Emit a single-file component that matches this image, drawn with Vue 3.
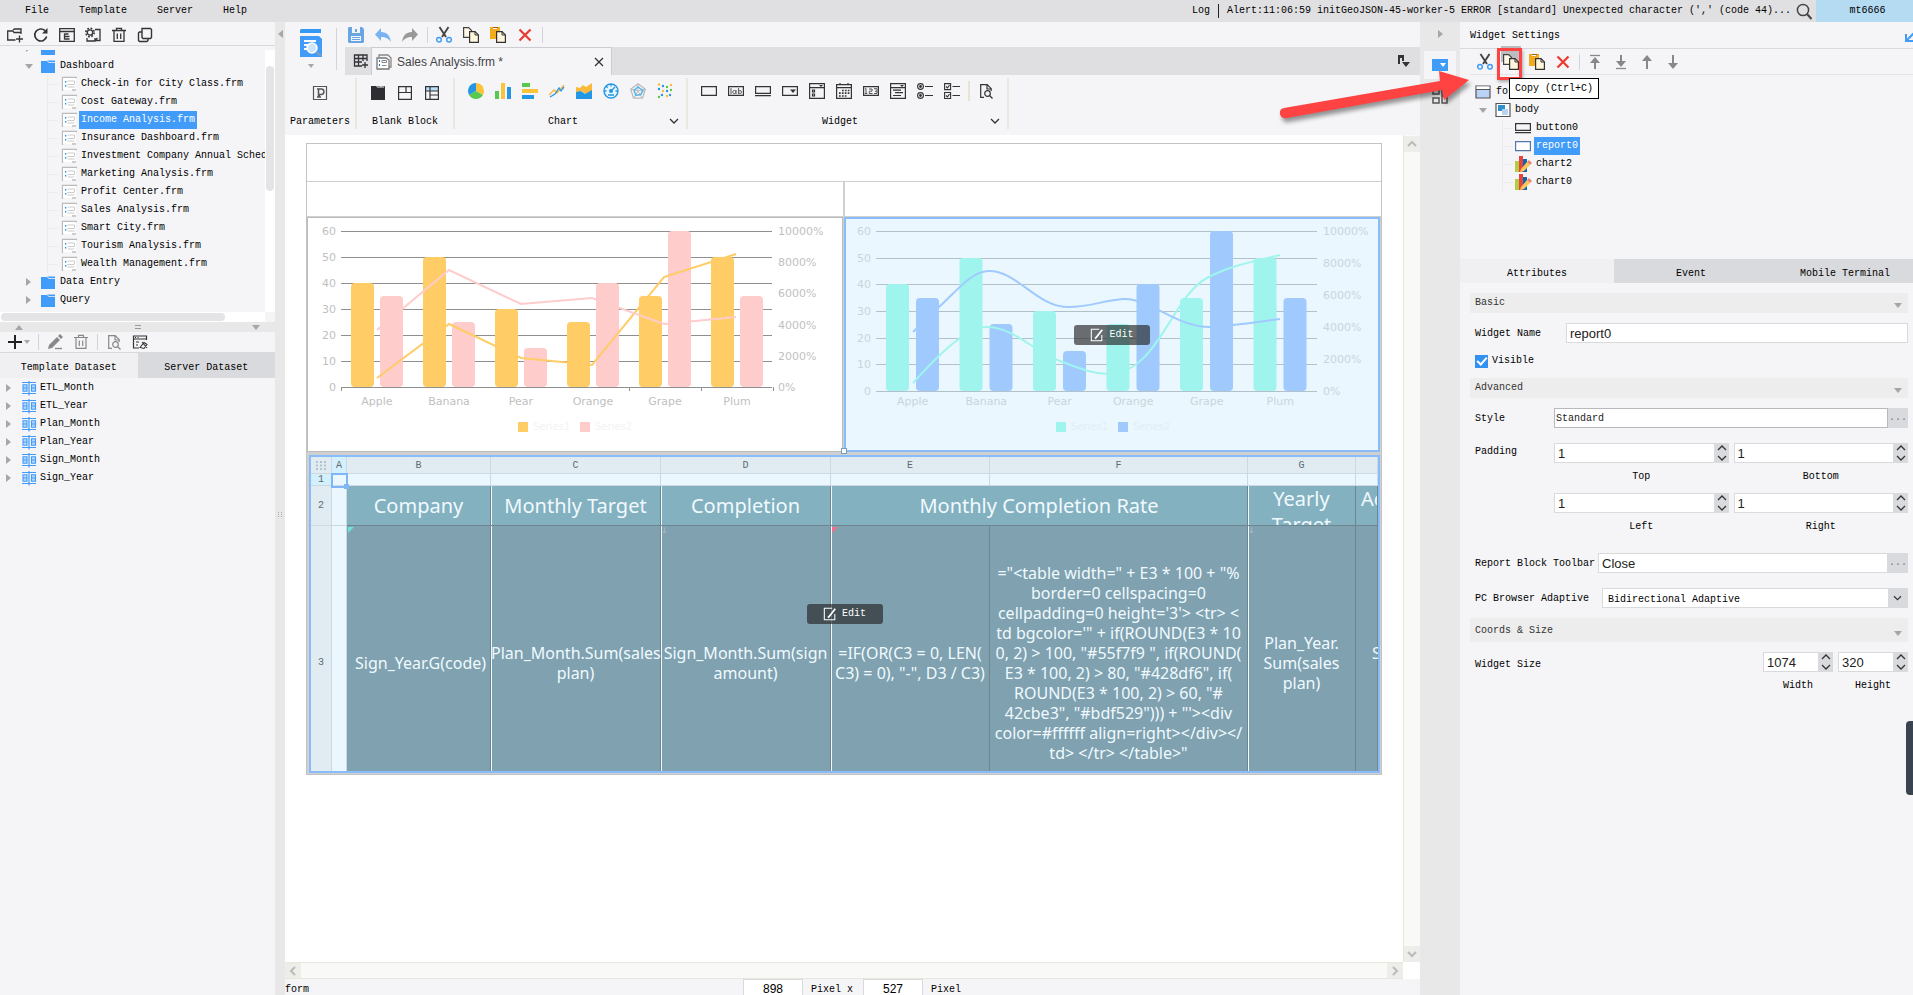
<script setup>
import { ref } from 'vue'

const D = '#333338'
const icons = {
  folderPlus: `<g fill="none" stroke="${D}" stroke-width="1.3"><path d="M8.500 13H.7V4h5.500M6 3l1.500-1H14v5M6 4l1 1.500h7M12.500 8.500v7M9 12h7"/></g>`,
  refresh: `<path d="M13.6 9.5A6 6 0 1 1 12 3.7" fill="none" stroke="${D}" stroke-width="1.7"/><path d="M14.5 1v5.500h-5.500z" fill="${D}"/>`,
  listBox: `<g fill="none" stroke="${D}" stroke-width="1.3"><path d="M.7 1.700h14.600v12.600H.7zM.7 4.500h14.600M5.500 6.500v6M5.500 7h4M5.500 9.500h5M5.500 12h5"/></g>`,
  gearDoc: `<g fill="none" stroke="${D}" stroke-width="1.3"><circle cx="5" cy="5.500" r="2.700"/><path d="M10 2.500h5v11H10M2 11v3h8v-3M12.500 11l-2 2"/></g><circle cx="5" cy="5.500" r="4.200" fill="none" stroke="${D}" stroke-width="1.600" stroke-dasharray="1.800 1.500"/>`,
  trash: `<path d="M1 3.500h14M5.500 3V1.300h5V3M3 4v10.300h10V4M6.300 6.500v5.500M9.700 6.500v5.500" fill="none" stroke="${D}" stroke-width="1.300"/>`,
  squares: `<path d="M5 1.500h8.500l1 1v8l-1 1H6l-1-1zM4.500 5H2.500l-1 1v7.500l1 1H10l1-1V12" fill="none" stroke="${D}" stroke-width="1.400"/>`,
  plus: `<path d="M8 1v14M1 8h14" stroke="#222" stroke-width="2"/>`,
  pencil: `<path d="M2 11l8-8 3 3-8 8-4 1zM11 2l2-2 3 3-2 2z" fill="#888"/><path d="M8 14.500h7" stroke="#888" stroke-width="1.300"/>`,
  trashG: `<path d="M1 3.500h14M5.500 3V1.300h5V3M3 4v10.300h10V4M6.300 6.500v5.500M9.700 6.500v5.500" fill="none" stroke="#888" stroke-width="1.200"/>`,
  docFindG: `<path d="M6 14.300H2.700V1.700h6.500l4 4V8M9 2v4h4" fill="none" stroke="#888" stroke-width="1.200"/><circle cx="9.500" cy="10.500" r="2.800" fill="none" stroke="#888" stroke-width="1.200"/><path d="M11.500 12.500l3 3" stroke="#888" stroke-width="1.300"/>`,
  docFind: `<path d="M6 14.300H2.700V1.700h6.500l4 4V8M9 2v4h4" fill="none" stroke="${D}" stroke-width="1.200"/><circle cx="9.500" cy="10.500" r="2.800" fill="none" stroke="${D}" stroke-width="1.200"/><path d="M11.500 12.500l3 3" stroke="${D}" stroke-width="1.300"/>`,
  formEdit: `<path d="M7 14H1.500V2h13v4M1.500 5h13M4 8h3M4 11h2M3 3.500h1M5.500 3.500h1" fill="none" stroke="${D}" stroke-width="1.200"/><path d="M8 13.500l4-5 3 2-3 4zM10 8l5 6" fill="none" stroke="${D}" stroke-width="1.100"/>`,
  save: `<path d="M0 1l1-1h13l2 2v13l-1 1H1l-1-1z" fill="#69a5e2"/><path d="M4 0h8v6H4z" fill="#f5f5f7"/><path d="M7 2h2v3H7z" fill="#69a5e2"/><path d="M3 9h10v5H3z" fill="#f5f5f7"/><path d="M4 10.500h8M4 12.500h8" stroke="#69a5e2"/>`,
  undo: `<path d="M6 1v4c6 0 9 3.500 10 10-2.500-3.500-5-5-10-5v4L0 7.500z" fill="#7ab3f0"/>`,
  redo: `<path d="M10 1v4C4 5 1 8.500 0 15c2.500-3.500 5-5 10-5v4l6-6.500z" fill="#999"/>`,
  cut: `<path d="M3.500 0l6.500 10M12.500 0L6 10" stroke="#444" stroke-width="1.900"/><circle cx="3" cy="12.700" r="2.300" fill="none" stroke="#419bf9" stroke-width="1.500"/><circle cx="13" cy="12.700" r="2.300" fill="none" stroke="#419bf9" stroke-width="1.500"/>`,
  copy: `<path d="M.6.600h5l3 3v6.800h-8z" fill="#fffbe8" stroke="#444" stroke-width="1.200"/><path d="M6.600 4.600h5.500l3.300 3.300v7.500H6.600z" fill="#fff6dc" stroke="#333" stroke-width="1.200"/><path d="M12 4.600V8h3.400" fill="none" stroke="#333"/>`,
  paste: `<path d="M0 0h10v12H0z" fill="#f2ab1c"/><path d="M3 0h4v2H3z" fill="#fff"/><path d="M3 0h5v1H3z" fill="#a55b16"/><path d="M6.600 4.600h5.500l3.300 3.300v7.500H6.600z" fill="#fff6dc" stroke="#333" stroke-width="1.200"/><path d="M12 4.600V8h3.400" fill="none" stroke="#333"/>`,
  del: `<path d="M2.500 2.500l11 11M13.500 2.500l-11 11" stroke="#ea3c33" stroke-width="2.300"/>`,
  toTop: `<path d="M3 1.500h10" stroke="#888" stroke-width="1.300"/><path d="M8 3l5 6H3z" fill="#888"/><path d="M7 8h2v7H7z" fill="#888"/>`,
  toBottom: `<path d="M3 14.500h10" stroke="#888" stroke-width="1.300"/><path d="M8 13L3 7h10z" fill="#888"/><path d="M7 1h2v7H7z" fill="#888"/>`,
  up: `<path d="M8 1l5 6H3z" fill="#888"/><path d="M7 6h2v9H7z" fill="#888"/>`,
  down: `<path d="M8 15L3 9h10z" fill="#888"/><path d="M7 1h2v9H7z" fill="#888"/>`,
  gridPlus: `<path d="M9 13H1.500V2H14v6M1.500 5.500H14M1.500 9H9M5.500 2v11M10 2v6M12 9v6M9 12h6" fill="none" stroke="${D}" stroke-width="1.300"/>`,
  frmTab: `<path d="M3 3V1h9l3 3v9h-2" fill="none" stroke="#888" stroke-width="1.300"/><path d="M1 4h9l3 2v9H1z" fill="#fff" stroke="#777" stroke-width="1.300"/><path d="M3 6h1v2H3zM3 10h1v2H3z" fill="#1c6fd1"/><path d="M6 6.500h4.500v2H6zM6 11.500h4.500" fill="none" stroke="#888"/>`,
  param: `<path d="M1.500 1.500h13v13h-13z" fill="none" stroke="#555" stroke-width="1.200"/><path d="M5 4h4.200a2.600 2.600 0 0 1 0 5.400H7.300V12H5M6.500 4v8M5 12h4" fill="none" stroke="#555" stroke-width="1.500"/>`,
  block1: `<path d="M1 1h5v2h9v12H1z" fill="#2e2e32"/><path d="M7 2h3M12 2h3" stroke="#2e2e32" stroke-width="1"/><path d="M6.500 1.500v3M11 1.500v3M14.500 1.500v3" stroke="#2e2e32"/>`,
  block2: `<path d="M1.600 1.600h12.800v12.800H1.600zM1.600 7.500h12.800M9 1.600v6" fill="none" stroke="${D}" stroke-width="1.200"/>`,
  block3: `<path d="M1.600 1.600h12.800V6H1.600z" fill="#b9def5"/><path d="M1.600 1.600h12.800v12.800H1.600zM1.600 6h12.800M6 1.600v12.800M6 10h8" fill="none" stroke="${D}" stroke-width="1.200"/>`,
  pie: `<path d="M8 8V0a8 8 0 0 0-6.900 12z" fill="#2496e6"/><path d="M8 8V0a8 8 0 0 1 6.900 12z" fill="#fbc33b"/><path d="M8 8l6.900 4A8 8 0 0 1 1.100 12z" fill="#57c94f"/>`,
  column: `<path d="M0 8h4v8H0z" fill="#57c94f"/><path d="M6 0h4v16H6z" fill="#fbc33b"/><path d="M12 4h4v12h-4z" fill="#2496e6"/>`,
  bar: `<path d="M0 0h8v4H0z" fill="#57c94f"/><path d="M0 6h16v4H0z" fill="#fbc33b"/><path d="M0 12h12v4H0z" fill="#2496e6"/>`,
  line: `<path d="M0 12l5-5 3 3 7-8" fill="none" stroke="#fbb93b" stroke-width="1.400"/><path d="M1 14l5-3 4-6 2 3 3-4" fill="none" stroke="#2496e6" stroke-width="1.300"/>`,
  area: `<path d="M0 4l4 1 3-3 3 2 6-4v8L9 11 6 8l-6 2z" fill="#fbb93b"/><path d="M0 9l5-1 4 3 7-4v9H0z" fill="#2496e6"/>`,
  gauge: `<circle cx="8" cy="8" r="7" fill="#e9f5fd" stroke="#2496e6" stroke-width="1.400"/><path d="M8 8l4-4M8 1v2.500M1 8h2.500M12.500 8H15M3 3l1.700 1.700M5 12h6" stroke="#2496e6" stroke-width="1.300"/><circle cx="8" cy="8" r="2" fill="#2496e6"/>`,
  radar: `<path d="M8 .7l7.300 5.500-2.800 9h-9L.7 6.200z" fill="none" stroke="#bbb" stroke-width="1.300"/><path d="M8 4l4 3-1.500 5h-5L4 7zM8 1v7M1 6l7 2M15 6L8 8M4 15l4-7M12 15L8 8" fill="none" stroke="#bbb"/><path d="M8 4l5 3.500-2 4-5 1-2-5z" fill="none" stroke="#54b6f2" stroke-width="1.400"/>`,
  scatter: `<g fill="#2496e6"><circle cx="6" cy="3" r="1.200"/><circle cx="2" cy="6" r="1.200"/><circle cx="10" cy="8" r="1.200"/><circle cx="13" cy="12" r="1.200"/><circle cx="5" cy="12" r="1.200"/></g><g fill="#fbb93b"><circle cx="2" cy="1.500" r="1.200"/><circle cx="14" cy="2" r="1.200"/><circle cx="6" cy="8" r="1.200"/><circle cx="10" cy="13" r="1.200"/></g><g fill="#57c94f"><circle cx="10" cy="4" r="1.200"/><circle cx="14" cy="7" r="1.200"/><circle cx="2" cy="14" r="1.200"/></g>`,
  wRect: `<path d="M.6 3.600h14.800v8.800H.6z" fill="none" stroke="${D}" stroke-width="1.200"/>`,
  wLab: `<path d="M.6 3.600h14.800v8.800H.6z" fill="none" stroke="${D}" stroke-width="1.200"/><path d="M3 5v6M8 7v4M10.500 5v6" stroke="#666" stroke-width="1.100"/><circle cx="6.300" cy="9" r="1.600" fill="none" stroke="#666"/><circle cx="12" cy="9" r="1.500" fill="none" stroke="#666"/>`,
  wButton: `<path d="M.6 3.600h14.800v6.800H.6zM0 12.600h16" fill="none" stroke="${D}" stroke-width="1.200"/>`,
  wCombo: `<path d="M.6 3.600h14.800v8.800H.6z" fill="none" stroke="${D}" stroke-width="1.200"/><path d="M8 6.500h6L11 10z" fill="${D}"/>`,
  wTreeCombo: `<path d="M.6.600h14.800v14.800H.6zM.6 4.600h14.800M3.500 7h2v2h-2zM3.500 11h2v2h-2z" fill="none" stroke="${D}" stroke-width="1.200"/><path d="M10 2h4l-2 2z" fill="${D}"/>`,
  wCalendar: `<path d="M.6 1.600h14.800v13.800H.6zM.6 4.600h14.800M4 0v2M12 0v2" fill="none" stroke="${D}" stroke-width="1.200"/><path d="M6 7.500h8M3 10.200h11M3 13h8" stroke="${D}" stroke-width="1.700" stroke-dasharray="1.700 1.200"/>`,
  wNumber: `<path d="M.6 3.600h14.800v8.800H.6z" fill="none" stroke="${D}" stroke-width="1.200"/><path d="M2 6l1-.500v5M1.800 10.500h2.500M6 6h3v2.200H6.300v2.300H9.500M11 5.700h3v2.500h-2M14 8v2.500h-3" fill="none" stroke="#555"/>`,
  wText: `<path d="M.6.600h14.800v14.800H.6zM.6 4.600h14.800M3 7.200h8M5 9.700h8M3 12.500h8" fill="none" stroke="${D}" stroke-width="1.200"/><path d="M10 2h4l-2 2z" fill="${D}"/>`,
  wRadio: `<g fill="none" stroke="${D}" stroke-width="1.100"><circle cx="3.500" cy="3.500" r="2.900"/><circle cx="3.500" cy="12.500" r="2.900"/><path d="M8 3.500h8M8 12.500h8"/></g><circle cx="3.500" cy="3.500" r="1.400" fill="${D}"/><circle cx="3.500" cy="12.500" r="1.400" fill="${D}"/>`,
  wCheck: `<path d="M.6.600h6v6h-6zM.6 9.500h6v6h-6zM8.500 3.500H16M8.500 12.500H16M2 3.500l1.500 1.500 2-3M2 12.500L3.500 14l2-3" fill="none" stroke="${D}" stroke-width="1.100"/>`,
  chevron: `<path d="M4 6l4 4 4-4" fill="none" stroke="#333" stroke-width="1.300"/>`,
  close: `<path d="M4 4l8 8M12 4l-8 8" stroke="#333" stroke-width="1.300"/>`,
  corner: `<path d="M3 2h6v6H7V5H5v6H3z" fill="#333"/><path d="M7 9h8l-4 5z" fill="#333"/>`,
  search: `<circle cx="7" cy="7" r="5.600" fill="none" stroke="#444" stroke-width="1.500"/><path d="M11 11l4.500 5" stroke="#444" stroke-width="2"/>`,
  folder: `<path d="M1 3h6l2 2h6v10H1z" fill="#419bf9"/><path d="M7 2.500h8v1.700H9.500z" fill="#419bf9"/>`,
  frm: `<path d="M1.500 15V1.500H16" fill="none" stroke="#bbb" stroke-width="1.300"/><path d="M2 2h13v12H2z" fill="#fff"/><path d="M4 5h1.300v1.500H4zM4 9h1.300v1.500H4z" fill="#1c8fe0"/><path d="M6.500 5h7v3M6.500 8.500h7M6.500 11h7" fill="none" stroke="#ccc"/><path d="M11 13h4v2h-4z" fill="#ccc"/>`,
  dataset: `<path d="M1 2.500h14M1 13.500h14M8 1v14.500" stroke="#419bf9" stroke-width="1.200"/><g fill="#b5d7fb" stroke="#419bf9" stroke-width="1.100"><path d="M2 4.800h4v6.400H2zM2 8h4M10.500 4.800h4v6.400h-4zM10.500 8h4"/></g>`,
  wForm: `<path d="M1 2h14v12H1z" fill="#b9d2f5" stroke="#555" stroke-width="1.200"/><path d="M1.500 2.500h13V5h-13z" fill="#fff"/><path d="M1 5.500h14" stroke="#555"/>`,
  wBody: `<path d="M1 1.500h14v13H1z" fill="#fff" stroke="#555" stroke-width="1.200"/><path d="M3 3h7v6H3z" fill="#2f8fc9"/><path d="M7 7h6v6H7z" fill="#b9d2f5"/>`,
  wReport: `<path d="M.6 3.600h14.800v9H.6z" fill="#fff" stroke="#5377a8" stroke-width="1.200"/>`,
  wChart: `<path d="M0 5h4v11H0z" fill="#b4cb46"/><path d="M4 0h4v16H4z" fill="#e8443c"/><path d="M8 3h4v13H8z" fill="#0d68b1"/><path d="M6 13l6-7 3 3-6 6-4 1z" fill="#fbc55a"/><path d="M12 6l2-2 3 3-2 2z" fill="#f0836a"/>`,
  edit: `<path d="M10.500 1.500h-9v13h12V8" fill="none" stroke="#fff" stroke-width="1.200"/><path d="M14 2l-7 9-1.500 1" fill="none" stroke="#fff" stroke-width="2"/>`,
  sideBlue: `<path d="M0 2h16v12H0z" fill="#419bf9"/><path d="M8 6h6l-3 4z" fill="#fff"/>`,
  sideGrid: `<path d="M1 1h6v5H1zM1 10h6v5H1zM10 1h5v14h-5zM10 8h5" fill="none" stroke="#555" stroke-width="1.500"/>`,
  pin: `<path d="M16 1L4 13M3 7v7h7" fill="none" stroke="#419bf9" stroke-width="2"/>`
}

const menus = ['File', 'Template', 'Server', 'Help']
const leftTools = ['folderPlus', 'refresh', 'listBox', 'gearDoc', 'trash', 'squares']
const files = [
  'Check-in for City Class.frm', 'Cost Gateway.frm', 'Income Analysis.frm', 'Insurance Dashboard.frm',
  'Investment Company Annual Schedule.frm', 'Marketing Analysis.frm', 'Profit Center.frm',
  'Sales Analysis.frm', 'Smart City.frm', 'Tourism Analysis.frm', 'Wealth Management.frm'
]
const selectedFile = ref('Income Analysis.frm')
const datasets = ['ETL_Month', 'ETL_Year', 'Plan_Month', 'Plan_Year', 'Sign_Month', 'Sign_Year']
const chartTools = ['pie', 'column', 'bar', 'line', 'area', 'gauge', 'radar', 'scatter']
const widgetTools = ['wRect', 'wLab', 'wButton', 'wCombo', 'wTreeCombo', 'wCalendar', 'wNumber', 'wText', 'wRadio', 'wCheck']
const widgets = [
  { name: 'button0', icon: 'wButton' },
  { name: 'report0', icon: 'wReport' },
  { name: 'chart2', icon: 'wChart' },
  { name: 'chart0', icon: 'wChart' }
]
const selectedWidget = ref('report0')

const fruits = ['Apple', 'Banana', 'Pear', 'Orange', 'Grape', 'Plum']
const first = [40, 50, 30, 25, 35, 50]
const second = [35, 25, 15, 40, 60, 35]
const charts = [
  {
    name: 'chart0', box: '0 0 534 233', left: 33, right: 464, top: 13, bottom: 169, pitch: 72, a: 10, b: 39, w: 23,
    colors: ['#ffcc66', '#ffcccc'], grid: '#8f8f8f', text: '#bfbfbf', faint: '#f3f3f3', ticks: [0, 4, 5, 6],
    lines: ['M69 160L141 106L213 140L284 147L356 59L428 36', 'M69 112L141 52L213 86L284 80L356 106L428 99'], legendY: 204, labelY: 187
  },
  {
    name: 'chart2', box: '0 0 532 231', left: 30, right: 471, top: 12, bottom: 172, pitch: 73.5, a: 10, b: 40, w: 23,
    colors: ['#9ff5ed', '#a0cafd'], grid: '#b2c1c9', text: '#c9d5db', faint: '#e1eef5', ticks: [],
    lines: ['M67 164C85 144 118 108 141 108C168 108 188 133 214 142C240 152 250 155 262 155C312 155 325 78 361 59C385 46 410 42 434 36',
      'M67 113L93 88C110 73 125 52 143 52C172 52 190 88 223 88C245 88 262 80 279 80C305 80 330 108 364 108C385 107 410 103 434 100'], legendY: 203, labelY: 186, selected: true
  }
]
const yOf = (c, v) => Math.round(c.bottom - (v * (c.bottom - c.top)) / 60)
const y2Of = (c, v) => Math.round(c.bottom - (v * (c.bottom - c.top)) / 10000)

const formula = `="<table width=" + E3 * 100 + "%
border=0 cellspacing=0
cellpadding=0 height='3'> <tr> <
td bgcolor='" + if(ROUND(E3 * 10
0, 2) > 100, "#55f7f9 ", if(ROUND(
E3 * 100, 2) > 80, "#428df6", if(
ROUND(E3 * 100, 2) > 60, "#
42cbe3", "#bdf529"))) + "'><div
color=#ffffff align=right></div></
td> </tr> </table>"`

const name = ref('report0')
const visible = ref(true)
const pads = ref([
  { label: 'Top', value: '1' }, { label: 'Bottom', value: '1' },
  { label: 'Left', value: '1' }, { label: 'Right', value: '1' }
])
const sizes = ref([{ label: 'Width', value: '1074' }, { label: 'Height', value: '320' }])
</script>

<template>
  <div class="app">
    <header class="top">
      <nav class="menus">
        <button v-for="m in menus" :key="m">{{ m }}</button>
      </nav>
      <div class="log"><span>Log</span><i></i><span>Alert:11:06:59 initGeoJSON-45-worker-5 ERROR [standard] Unexpected character (',' (code 44)...</span></div>
      <button class="find" aria-label="Search"><svg class="ic" viewBox="0 0 16 16" v-html="icons.search"></svg></button>
      <button class="user">mt6666</button>
    </header>

    <aside class="left">
      <div class="ltools">
        <button v-for="t in leftTools" :key="t" :aria-label="t"><svg class="ic" viewBox="0 0 16 16" v-html="icons[t]"></svg></button>
      </div>
      <div class="tree-area">
        <ul class="tree">
          <li class="dir"><i class="tri"></i><svg class="ic" viewBox="0 0 16 16" v-html="icons.folder"></svg>Chart</li>
          <li class="dir"><i class="tri open"></i><svg class="ic" viewBox="0 0 16 16" v-html="icons.folder"></svg>Dashboard</li>
          <li v-for="f in files" :key="f" class="file">
            <svg class="ic" viewBox="0 0 16 16" v-html="icons.frm"></svg><span :class="{ sel: f === selectedFile }" @click="selectedFile = f">{{ f }}</span>
          </li>
          <li class="dir"><i class="tri"></i><svg class="ic" viewBox="0 0 16 16" v-html="icons.folder"></svg>Data Entry</li>
          <li class="dir"><i class="tri"></i><svg class="ic" viewBox="0 0 16 16" v-html="icons.folder"></svg>Query</li>
          <li class="dir"><i class="tri"></i><svg class="ic" viewBox="0 0 16 16" v-html="icons.folder"></svg></li>
        </ul>
        <div class="vbar"><i></i></div>
      </div>
      <div class="hbar"><i></i></div>
      <div class="splitter"><i class="tri up"></i><b></b><i class="tri open"></i></div>
      <div class="dtools">
        <button aria-label="Add dataset"><svg class="ic" viewBox="0 0 16 16" v-html="icons.plus"></svg><i class="tri open small"></i></button>
        <i class="sep"></i>
        <button aria-label="Edit dataset"><svg class="ic" viewBox="0 0 16 16" v-html="icons.pencil"></svg></button>
        <button aria-label="Delete dataset"><svg class="ic" viewBox="0 0 16 16" v-html="icons.trashG"></svg></button>
        <i class="sep"></i>
        <button aria-label="Preview dataset"><svg class="ic" viewBox="0 0 16 16" v-html="icons.docFindG"></svg></button>
        <button aria-label="Manage connections"><svg class="ic" viewBox="0 0 16 16" v-html="icons.formEdit"></svg></button>
      </div>
      <div class="tabs">
        <button class="on">Template Dataset</button><button>Server Dataset</button>
      </div>
      <ul class="sets">
        <li v-for="d in datasets" :key="d"><i class="tri"></i><svg class="ic" viewBox="0 0 16 16" v-html="icons.dataset"></svg>{{ d }}</li>
      </ul>
    </aside>

    <div class="gutter"><i class="tri back"></i><b></b></div>

    <main class="center">
      <div class="headline">
        <button class="preview" aria-label="Preview">
          <svg width="22" height="28" viewBox="0 0 22 28"><path d="M1 0h20v4H0V1z" fill="#3399f5" /><path d="M0 7h19l3 3v18H0z" fill="#419bf9" /><path d="M4 12h12M4 16h6M4 20h4" stroke="#fff" stroke-width="2" /><circle cx="12" cy="19" r="5" fill="#cfe5fb" stroke="#fff" stroke-width="1.500" /><path d="M16 23l5 4" stroke="#8a9db0" stroke-width="2" /></svg>
          <i class="tri open small"></i>
        </button>
        <div class="heads">
          <div class="mtools">
            <button aria-label="Save"><svg class="ic" viewBox="0 0 16 16" v-html="icons.save"></svg></button>
            <button aria-label="Undo"><svg class="ic" viewBox="0 0 16 16" v-html="icons.undo"></svg></button>
            <button aria-label="Redo"><svg class="ic" viewBox="0 0 16 16" v-html="icons.redo"></svg></button>
            <i class="sep"></i>
            <button aria-label="Cut"><svg class="ic" viewBox="0 0 16 16" v-html="icons.cut"></svg></button>
            <button aria-label="Copy"><svg class="ic" viewBox="0 0 16 16" v-html="icons.copy"></svg></button>
            <button aria-label="Paste"><svg class="ic" viewBox="0 0 16 16" v-html="icons.paste"></svg></button>
            <button aria-label="Delete"><svg class="ic" viewBox="0 0 16 16" v-html="icons.del"></svg></button>
            <i class="sep"></i>
          </div>
          <div class="docs">
            <button class="newdoc" aria-label="New template"><svg class="ic" viewBox="0 0 16 16" v-html="icons.gridPlus"></svg></button>
            <div class="doc">
              <svg class="ic" viewBox="0 0 16 16" v-html="icons.frmTab"></svg><span>Sales Analysis.frm *</span>
              <button aria-label="Close"><svg class="ic" viewBox="0 0 16 16" v-html="icons.close"></svg></button>
            </div>
            <button class="corner" aria-label="Open templates"><svg class="ic" viewBox="0 0 16 16" v-html="icons.corner"></svg></button>
          </div>
        </div>
      </div>

      <div class="ribbon">
        <section class="g-param">
          <div><button aria-label="Parameter"><svg class="ic" viewBox="0 0 16 16" v-html="icons.param"></svg></button></div>
          <h4>Parameters</h4>
        </section>
        <section class="g-blank">
          <div><button v-for="b in ['block1', 'block2', 'block3']" :key="b" :aria-label="b"><svg class="ic" viewBox="0 0 16 16" v-html="icons[b]"></svg></button></div>
          <h4>Blank Block</h4>
        </section>
        <section class="g-chart">
          <div><button v-for="b in chartTools" :key="b" :aria-label="b"><svg class="ic" viewBox="0 0 16 16" v-html="icons[b]"></svg></button></div>
          <h4>Chart</h4>
          <button class="more" aria-label="More charts"><svg class="ic" viewBox="0 0 16 16" v-html="icons.chevron"></svg></button>
        </section>
        <section class="g-widget">
          <div>
            <button v-for="b in widgetTools" :key="b" :aria-label="b"><svg class="ic" viewBox="0 0 16 16" v-html="icons[b]"></svg></button>
            <i class="sep"></i>
            <button aria-label="Find widget"><svg class="ic" viewBox="0 0 16 16" v-html="icons.docFind"></svg></button>
          </div>
          <h4>Widget</h4>
          <button class="more" aria-label="More widgets"><svg class="ic" viewBox="0 0 16 16" v-html="icons.chevron"></svg></button>
        </section>
      </div>

      <div class="stage">
        <div class="canvas">
          <div class="form">
            <div class="blank wide"></div>
            <div class="blank"></div>
            <div class="blank"></div>
            <figure v-for="c in charts" :key="c.name" class="chart" :class="{ picked: c.selected }">
              <svg class="plot" :viewBox="c.box">
                <g :stroke="c.grid" shape-rendering="crispEdges">
                  <line v-for="v in [0, 10, 20, 30, 40, 50, 60]" :key="v" :x1="c.left" :x2="c.right" :y1="yOf(c, v)" :y2="yOf(c, v)" />
                  <line v-for="t in c.ticks" :key="'t' + t" :x1="c.left + t * c.pitch" :x2="c.left + t * c.pitch" :y1="c.bottom" :y2="c.bottom + 4" />
                </g>
                <g v-for="(f, i) in fruits" :key="f">
                  <rect :x="c.left + c.a + i * c.pitch" :y="yOf(c, first[i])" :width="c.w" :height="c.bottom - yOf(c, first[i])" rx="4" :fill="c.colors[0]" />
                  <rect :x="c.left + c.b + i * c.pitch" :y="yOf(c, second[i])" :width="c.w" :height="c.bottom - yOf(c, second[i])" rx="4" :fill="c.colors[1]" />
                  <text :x="c.left + c.pitch * (i + 0.5)" :y="c.labelY" text-anchor="middle" :fill="c.text">{{ f }}</text>
                </g>
                <path v-for="(l, i) in c.lines" :key="l" :d="l" fill="none" :stroke="c.colors[i]" stroke-width="2" />
                <text v-for="v in [0, 10, 20, 30, 40, 50, 60]" :key="'l' + v" :x="c.left - 5" :y="yOf(c, v) + 4" text-anchor="end" :fill="c.text">{{ v }}</text>
                <text v-for="v in [0, 2000, 4000, 6000, 8000, 10000]" :key="'r' + v" :x="c.right + 6" :y="y2Of(c, v) + 4" :fill="c.text">{{ v }}%</text>
                <g v-for="(col, i) in c.colors" :key="col">
                  <rect :x="210 + i * 62" :y="c.legendY" width="10" height="10" :fill="col" />
                  <text :x="225 + i * 62" :y="c.legendY + 8" :fill="c.faint" class="leg">Series{{ i + 1 }}</text>
                </g>
              </svg>
              <button v-if="c.selected" class="edit"><svg class="ic" viewBox="0 0 16 16" v-html="icons.edit"></svg>Edit</button>
              <i v-if="c.selected" class="handle"></i>
            </figure>
            <div class="report">
              <table>
                <colgroup><col class="c0" /><col class="ca" /><col class="cb" /><col class="cc" /><col class="cc" /><col class="ce" /><col class="cf" /><col class="cg" /><col /></colgroup>
                <tbody>
                  <tr class="r0">
                    <th><svg width="12" height="9" viewBox="0 0 12 9"><path d="M1 1h11M1 4.500h11M1 8h11" stroke="#b3c3cb" stroke-width="2" stroke-dasharray="2 2" /></svg></th>
                    <th class="hot">A</th><th>B</th><th>C</th><th>D</th><th>E</th><th>F</th><th>G</th><th></th>
                  </tr>
                  <tr class="r1"><th class="hot">1</th><td><i class="cursor"></i></td><td></td><td></td><td></td><td></td><td></td><td></td><td></td></tr>
                  <tr class="r2">
                    <th>2</th><td></td><td class="h">Company</td><td class="h w">Monthly Target</td><td class="h w">Completion</td>
                    <td class="h w" colspan="2">Monthly Completion Rate</td><td class="h w"><p>Yearly<br />Target</p></td><td class="h"><p class="cutoff">Ac</p></td>
                  </tr>
                  <tr class="r3">
                    <th>3</th><td></td>
                    <td class="b"><i class="mark teal"></i>&nbsp;Sign_Year.G(code)</td>
                    <td class="b w">Plan_Month.Sum(sales<br />plan)</td>
                    <td class="b w"><i class="drop">↓</i>Sign_Month.Sum(sign<br />amount)</td>
                    <td class="b w"><i class="mark pink"></i>=IF(OR(C3 = 0, LEN(<br />C3) = 0), "-", D3 / C3)</td>
                    <td class="b pre">{{ formula }}</td>
                    <td class="b w"><i class="drop">↓</i>Plan_Year.<br />Sum(sales<br />plan)</td>
                    <td class="b last">S<br />&nbsp;</td>
                  </tr>
                </tbody>
              </table>
              <button class="edit"><svg class="ic" viewBox="0 0 16 16" v-html="icons.edit"></svg>Edit</button>
            </div>
          </div>
        </div>
        <div class="track v"><button aria-label="Scroll up"><svg class="ic rot180" viewBox="0 0 16 16"><path d="M4 6l4 4 4-4" /></svg></button><button aria-label="Scroll down"><svg class="ic" viewBox="0 0 16 16"><path d="M4 6l4 4 4-4" /></svg></button></div>
        <div class="track h"><button aria-label="Scroll left"><svg class="ic rot90" viewBox="0 0 16 16"><path d="M4 6l4 4 4-4" /></svg></button><button aria-label="Scroll right"><svg class="ic rot270" viewBox="0 0 16 16"><path d="M4 6l4 4 4-4" /></svg></button></div>
      </div>
      <footer class="status">
        <span class="grow">form</span>
        <input id="pw" value="898" /><label for="pw">Pixel x</label>
        <input id="ph" value="527" /><label for="ph">Pixel</label>
        <span class="grow rest"></span>
      </footer>
    </main>

    <div class="strip">
      <i class="tri"></i>
      <button class="on" aria-label="Widget settings"><svg class="ic" viewBox="0 0 16 16" v-html="icons.sideBlue"></svg></button>
      <button aria-label="Widget library"><svg class="ic" viewBox="0 0 16 16" v-html="icons.sideGrid"></svg></button>
    </div>

    <aside class="right">
      <div class="title"><h3>Widget Settings</h3><button aria-label="Detach"><svg class="ic" viewBox="0 0 16 16" v-html="icons.pin"></svg></button></div>
      <div class="rtools">
        <button aria-label="Cut"><svg class="ic" viewBox="0 0 16 16" v-html="icons.cut"></svg></button>
        <button class="hover" aria-label="Copy"><svg class="ic" viewBox="0 0 16 16" v-html="icons.copy"></svg><b class="ring"></b><span class="tip">Copy (Ctrl+C)</span></button>
        <button aria-label="Paste"><svg class="ic" viewBox="0 0 16 16" v-html="icons.paste"></svg></button>
        <button aria-label="Delete"><svg class="ic" viewBox="0 0 16 16" v-html="icons.del"></svg></button>
        <i class="sep"></i>
        <button v-for="t in ['toTop', 'toBottom', 'up', 'down']" :key="t" :aria-label="t"><svg class="ic" viewBox="0 0 16 16" v-html="icons[t]"></svg></button>
      </div>
      <ul class="wtree">
        <li class="l0"><svg class="ic" viewBox="0 0 16 16" v-html="icons.wForm"></svg><span>form</span></li>
        <li class="l1"><i class="tri open"></i><svg class="ic" viewBox="0 0 16 16" v-html="icons.wBody"></svg><span>body</span></li>
        <li v-for="w in widgets" :key="w.name" class="l2">
          <svg class="ic" viewBox="0 0 16 16" v-html="icons[w.icon]"></svg><span :class="{ sel: w.name === selectedWidget }" @click="selectedWidget = w.name">{{ w.name }}</span>
        </li>
      </ul>
      <div class="tabs rtabs"><button class="on">Attributes</button><button>Event</button><button>Mobile Terminal</button></div>
      <div class="props">
        <h4 class="sect">Basic<i class="tri open"></i></h4>
        <div class="row"><label for="wn" class="l-name">Widget Name</label><input id="wn" v-model="name" /></div>
        <label class="check"><input v-model="visible" type="checkbox" />Visible</label>
        <h4 class="sect">Advanced<i class="tri open"></i></h4>
        <div class="row"><label for="st" class="l-style">Style</label><input id="st" class="mono" value="Standard" /><button class="dots">...</button></div>
        <div class="padrow">
          <span class="l-style">Padding</span>
          <div class="pads">
            <div v-for="p in pads" :key="p.label" class="num">
              <div class="spin"><input :id="p.label" v-model="p.value" /><div><button aria-label="Increase"><svg class="ic rot180" viewBox="0 0 16 16" v-html="icons.chevron"></svg></button><button aria-label="Decrease"><svg class="ic" viewBox="0 0 16 16" v-html="icons.chevron"></svg></button></div></div>
              <label :for="p.label">{{ p.label }}</label>
            </div>
          </div>
        </div>
        <div class="row"><label for="tb" class="l-bar">Report Block Toolbar</label><input id="tb" value="Close" /><button class="dots">...</button></div>
        <div class="row end">
          <label for="ad" class="l-pc">PC Browser Adaptive</label>
          <div class="pick"><select id="ad"><option>Bidirectional Adaptive</option></select><svg class="ic" viewBox="0 0 16 16" v-html="icons.chevron"></svg></div>
        </div>
        <h4 class="sect tall">Coords &amp; Size<i class="tri open"></i></h4>
        <div class="sizerow">
          <span>Widget Size</span>
          <div v-for="p in sizes" :key="p.label" class="num">
            <div class="spin"><input :id="p.label" v-model="p.value" /><div><button aria-label="Increase"><svg class="ic rot180" viewBox="0 0 16 16" v-html="icons.chevron"></svg></button><button aria-label="Decrease"><svg class="ic" viewBox="0 0 16 16" v-html="icons.chevron"></svg></button></div></div>
            <label :for="p.label">{{ p.label }}</label>
          </div>
        </div>
      </div>
    </aside>

    <i class="grip"></i>
    <svg class="arrow" width="210" height="64" viewBox="0 0 210 64">
      <path d="M10 48L166 21L165 11L195 20L170 40L168 30L13 58Q7 59 6 54Q5 49 10 48Z" fill="#ff4242" />
    </svg>
  </div>
</template>

<style>
html, body, #app { height: 100%; }
body { overflow: hidden; }
</style>

<style scoped>
.app {
  position: relative;
  display: grid;
  grid-template: 22px minmax(0, 1fr) / 275px 10px minmax(0, 1fr) 40px 453px;
  height: 100vh;
  overflow: hidden;
  background: #f5f5f7;
  color: #000;
  font: 10px/18px "Liberation Mono", "DejaVu Sans Mono", monospace;
}
.app * { box-sizing: border-box; }
button, input, select { font: inherit; color: inherit; margin: 0; padding: 0; border: 0; background: none; border-radius: 0; outline: none; }
button { display: inline-flex; align-items: center; justify-content: center; }
ul, h3, h4, p, figure { margin: 0; padding: 0; list-style: none; font-weight: normal; font-size: inherit; }
.ic { width: 16px; height: 16px; flex: none; display: block; overflow: visible; }
.rot180 { transform: rotate(180deg); }
.rot90 { transform: rotate(90deg); }
.rot270 { transform: rotate(270deg); }
.tri { flex: none; width: 0; height: 0; border: 4px solid transparent; border-left: 5px solid #a6a6a6; border-right: 0; }
.tri.open { border: 4px solid transparent; border-top: 5px solid #a6a6a6; border-bottom: 0; }
.tri.up { border: 4px solid transparent; border-bottom: 5px solid #a6a6a6; border-top: 0; }
.tri.back { border: 4px solid transparent; border-right: 5px solid #a6a6a6; border-left: 0; }
.tri.small { border-width: 3px; border-top-width: 4px; border-bottom: 0; }
.sep { flex: none; width: 1px; height: 16px; background: #d4d4d8; }

.top { grid-column: 1 / -1; display: flex; align-items: center; background: #e0e0e2; }
.menus { display: flex; gap: 30px; padding-left: 25px; flex: 1; }
.menus, .log { height: 21px; align-items: center; align-self: flex-start; }
.log { display: flex; gap: 8px; white-space: nowrap; }
.log i { width: 1px; height: 14px; background: #222; }
.find { width: 25px; }
.top .user { width: 97px; height: 22px; background: #b5dbf2; padding-left: 6px; }

.left { display: flex; flex-direction: column; min-height: 0; overflow: hidden; }
.ltools { display: flex; align-items: center; gap: 10px; height: 24px; padding: 3px 7px 0; border-bottom: 1px solid #d9d9dd; }
.tree-area { display: flex; height: 266px; padding-top: 4px; }
.tree { flex: 1; min-width: 0; overflow: hidden; }
.tree li { display: flex; align-items: center; height: 18px; white-space: nowrap; position: relative; }
.tree li:first-child { margin-top: -11px; }
.dir { padding-left: 26px; }
.dir .ic { margin: 0 4px 0 9px; }
.dir .tri.open { margin: 0 -2px 0 -1px; }
.file { padding-left: 61px; }
.file::before { content: ""; position: absolute; left: 47px; top: 0; width: 10px; height: 18px; border-left: 1px solid #ebebee; background: linear-gradient(#ebebee, #ebebee) 0 9px / 10px 1px no-repeat; }
.file span { padding: 0 2px; margin-left: 2px; }
.sel { background: #419bf9; color: #fff; }
.vbar { width: 10px; background: #fff; padding: 16px 1px 0; }
.vbar i { display: block; height: 125px; border-radius: 4px; background: #e4e4e6; }
.hbar { height: 10px; background: #fff; padding: 1px; margin-right: 10px; }
.hbar i { display: block; width: 85%; height: 8px; border-radius: 4px; background: #e4e4e6; }
.splitter { height: 10px; display: flex; align-items: center; justify-content: space-between; padding: 0 15px; background: #e8e8e8; }
.splitter b { width: 6px; height: 4px; border: solid #999; border-width: 1px 0; }
.dtools { display: flex; align-items: center; gap: 10px; height: 21px; padding: 0 7px; border-bottom: 1px solid #d9d9dd; }
.dtools .sep { margin: 0 -2px; }
.dtools button:first-child .tri { margin-left: 1px; }
.tabs { display: flex; height: 25px; background: #d9dadd; overflow: hidden; }
.tabs button { flex: 1; padding-top: 4px; }
.tabs .on { background: #f0f0f2; }
.sets { padding-top: 1px; }
.sets li { display: flex; align-items: center; height: 18px; padding-left: 6px; }
.sets .ic { margin: 0 3px 0 10px; }

.gutter { background: #e8e8e8; display: flex; flex-direction: column; align-items: center; padding-top: 8px; }
.gutter b { width: 4px; height: 5px; border: dotted #aaa; border-width: 0 1px; margin-top: 474px; }

.center { display: flex; flex-direction: column; min-width: 0; min-height: 0; }
.headline { display: flex; }
.preview { width: 52px; flex-direction: column; gap: 7px; align-self: center; border-right: 1px solid #d4d4d8; height: 42px; }
.heads { flex: 1; min-width: 0; padding-left: 8px; }
.mtools { display: flex; align-items: center; gap: 11px; height: 25px; padding: 0 3px; }
.mtools .sep { margin: 0 -3px 0 -2px; }
.docs { display: flex; align-items: center; height: 28px; background: #dfdfe1; }
.newdoc { width: 26px; padding-left: 5px; }
.doc { display: flex; align-items: center; gap: 5px; width: 241px; height: 28px; padding: 0 4px; background: #f5f5f7; border: solid #cdcdd1; border-width: 1px 1px 0; font: 12px/18px "Liberation Sans", sans-serif; color: #444; }
.doc span { flex: 1; }
.corner { margin-left: auto; margin-right: 9px; }
.ribbon { display: flex; height: 60px; padding: 3px 0 6px; }
.ribbon section { position: relative; border-right: 2px solid #e9e7e0; display: flex; flex-direction: column; justify-content: space-between; padding-top: 5px; }
.ribbon section > div { display: flex; gap: 11px; height: 16px; align-items: center; }
.ribbon h4 { text-align: center; line-height: 14px; }
.more { position: absolute; right: 4px; bottom: 0; }
.g-param { width: 72px; }
.ribbon .g-param > div { justify-content: center; margin-top: 2px; }
.g-blank { width: 98px; }
.ribbon .g-blank > div { justify-content: center; margin-top: 2px; }
.g-chart { width: 233px; padding-left: 13px; }
.g-chart h4 { padding-right: 28px; }
.g-widget { width: 321px; padding-left: 13px; }
.g-widget h4 { padding-right: 28px; }
.g-widget .sep { background: #e9e3d2; width: 2px; height: 20px; margin: 0 -3px; }

.stage { flex: 1; min-height: 0; display: grid; grid-template: minmax(0, 1fr) 17px / minmax(0, 1fr) 17px; background: #fff; }
.canvas { padding: 8px 21px; overflow: hidden; }
.form { display: grid; grid-template-columns: 1fr 1fr; column-gap: 2px; border: 1px solid #c3c3c3; background: #d0d0d0; }
.blank { background: #fff; height: 34px; margin-bottom: 1px; }
.blank.wide { grid-column: 1 / -1; height: 37px; }
.chart { position: relative; background: #fff; border: 1px solid #bcbcbc; }
.chart.picked { border: 2px solid #88bdf9; background: #eaf7fe; margin: 0 1px 0 -1px; }
.plot { display: block; width: 100%; height: auto; font: 11px "DejaVu Sans", sans-serif; }
.leg { font-size: 10px; }
.handle { position: absolute; left: -5px; bottom: -4px; width: 6px; height: 6px; background: #fff; border: 1px solid #7a9cc2; z-index: 2; }
.edit { position: absolute; left: 50%; top: 50%; width: 76px; height: 20px; margin: -10px 0 0 -38px; gap: 5px; border-radius: 3px; background: rgba(36, 36, 36, 0.65); color: #fff; }
.edit .ic { width: 14px; height: 14px; }
.report { grid-column: 1 / -1; position: relative; margin: 3px 1px 1px 2px; height: 318px; overflow: hidden; border: 2px solid #88bdf9; background: #eaf7fe; }
table { width: 100%; table-layout: fixed; border-collapse: separate; border-spacing: 0; }
.c0 { width: 21px; }
.ca { width: 15px; }
.cb { width: 144px; }
.cc { width: 170px; }
.ce { width: 159px; }
.cf { width: 258px; }
.cg { width: 108px; }
th, td { padding: 0; border: solid #ccd9e0; border-width: 0 1px 1px 0; text-align: center; vertical-align: middle; position: relative; }
th { background: #e0ecf2; font-weight: normal; color: #5d6b72; line-height: 10px; padding-top: 1px; }
th.hot { background: #d4f0fc; }
th svg { display: block; margin: 0 auto; }
.r0 th { height: 17px; }
.r1 td, .r1 th { height: 12px; }
.r2 td, .r2 th { height: 40px; }
.r3 td, .r3 th { height: 274px; }
td.h, td.b { border-color: #6f868f; color: #f0fafe; font-family: "Noto Sans", "Open Sans", sans-serif; white-space: nowrap; }
td.h { background: #84b1c0; font-size: 20px; line-height: 26px; }
td.b { background: #7fa1b0; font-size: 16px; line-height: 20px; }
td.w { box-shadow: inset 1px 0 #f0fafe; }
td.pre { white-space: pre; }
td p { height: 39px; overflow: hidden; }
td p.cutoff { text-align: left; padding-left: 5px; }
td.last { text-align: left; padding-left: 16px; }
.cursor { position: absolute; left: -1px; top: -1px; width: 17px; height: 15px; border: 2px solid #7fb6fa; z-index: 1; }
.cursor::after { content: ""; position: absolute; right: -3px; bottom: -3px; width: 5px; height: 5px; background: #7fb6fa; }
.mark { position: absolute; left: 1px; top: 1px; border: 3px solid transparent; }
.teal { border-color: #6fe3d6 transparent transparent #6fe3d6; }
.pink { border-color: #f0708c transparent transparent #f0708c; }
.drop { position: absolute; left: 0; top: 1px; font: 8px/8px "DejaVu Sans", sans-serif; color: #b3bfc5; }
.track { background: #f9f9f7; display: flex; justify-content: space-between; }
.track.v { flex-direction: column; border-left: 1px solid #e9e7dc; padding-top: 1px; }
.track.h { border: solid #e9e7dc; border-width: 1px 0; }
.track button { width: 16px; height: 16px; background: #edede9; }
.track.h button { height: 15px; }
.track path { fill: none; stroke: #bbb; stroke-width: 2; }
.status { display: flex; align-items: flex-start; height: 16px; }
.status .grow { width: 458px; line-height: 22px; }
.status input { width: 60px; height: 20px; border: 1px solid #d9dadd; background: #fff; text-align: center; font: 12px "Liberation Sans", sans-serif; }
.status label { padding: 0 10px 0 8px; line-height: 22px; width: 60px; white-space: nowrap; }
.status .rest { flex: 1; width: auto; }

.strip { background: #e8e8e8; display: flex; flex-direction: column; align-items: center; padding-top: 8px; }
.strip button { width: 32px; height: 28px; }
.strip .on { background: #f5f5f7; margin: 13px 0 3px; }

.right { display: flex; flex-direction: column; min-width: 0; }
.title { display: flex; justify-content: space-between; align-items: center; height: 27px; border-bottom: 1px solid #d9d9dd; padding-left: 10px; overflow: hidden; }
.title h3 { padding-top: 2px; }
.title button { margin-right: -6px; }
.rtools { display: flex; align-items: center; gap: 10px; height: 26px; margin-left: 10px; padding-left: 7px; border-bottom: 1px solid #e3e3e6; }
.rtools .sep { margin: 0 -3px 0 -2px; }
.hover { position: relative; z-index: 3; isolation: isolate; }
.hover::before { content: ""; position: absolute; inset: -8px -2px 0; background: #bdbdc1; z-index: -1; height: 16px; }
.ring { position: absolute; left: -6px; top: -6px; width: 25px; height: 32px; border: 3px solid #ff4242; box-shadow: 1px 2px 3px rgba(0, 0, 0, 0.3); }
.tip { position: absolute; left: 6px; top: 24px; width: 90px; height: 21px; line-height: 19px; background: #fff; border: 1px solid #000; white-space: nowrap; }
.wtree { height: 184px; padding-top: 8px; }
.wtree li { display: flex; align-items: center; height: 18px; position: relative; }
.l0 { padding-left: 15px; }
.l1 { padding-left: 19px; }
.l1 .tri { margin-right: 8px; }
.l2 { padding-left: 55px; }
.l2::before { content: ""; position: absolute; left: 42px; top: 0; width: 10px; height: 18px; border-left: 1px solid #ebebee; background: linear-gradient(#ebebee, #ebebee) 0 9px / 10px 1px no-repeat; }
.wtree span { margin-left: 3px; padding: 0 2px; }
.wtree .l1 span { margin-left: 2px; }
.rtabs { height: 24px; }
.tabs.rtabs button { flex: 0 0 34%; padding-top: 6px; }
.props { padding: 10px 5px 0 10px; }
.sect { display: flex; align-items: center; justify-content: space-between; height: 20px; padding: 0 6px 0 5px; background: #ededed; color: #333; margin-bottom: 10px; }
.sect .tri { margin-top: 4px; }
.sect.tall { height: 24px; padding-top: 2px; }
.row { display: flex; align-items: center; height: 20px; padding-left: 5px; margin-bottom: 15px; }
.row.end { margin-bottom: 10px; }
.row label { padding-top: 2px; }
.row input { flex: 1; min-width: 0; height: 20px; }
.props input { background: #fff; border: 1px solid #d9dadd; padding-left: 3px; font: 13px/18px "Liberation Sans", sans-serif; color: #222; }
.props input.mono { font: inherit; border-color: #b9b9bd; padding: 0 0 0 1px; }
.l-name { width: 91px; }
.l-style { width: 79px; }
.l-bar { width: 123px; white-space: nowrap; }
.l-pc { width: 127px; }
.dots { width: 20px; height: 20px; background: #d9dadd; color: #777; line-height: 14px; }
.check { display: flex; align-items: center; gap: 4px; height: 14px; padding-left: 5px; margin: -4px 0 10px; }
.props .check input { appearance: none; width: 13px; height: 13px; padding: 0; border: 0; background: #3391f2; display: grid; place-items: center; }
.check input:checked::after { content: ""; width: 8px; height: 4px; border: solid #fff; border-width: 0 0 2px 2px; transform: rotate(-48deg); margin-top: -3px; }
.padrow { display: flex; padding-left: 5px; margin-bottom: 15px; }
.padrow > span { flex: none; line-height: 17px; }
.pads { flex: 1; display: grid; grid-template-columns: repeat(2, minmax(0, 1fr)); gap: 5px; }
.num { display: flex; flex-direction: column; height: 45px; }
.num label { text-align: center; line-height: 27px; }
.spin { display: flex; height: 20px; }
.spin input { flex: 1; min-width: 0; height: 20px; }
.spin div { width: 14px; display: flex; flex-direction: column; background: #d9dadd; }
.spin button { height: 10px; width: 14px; overflow: hidden; }
.pick { flex: 1; display: flex; position: relative; background: #fff; border: 1px solid #d9dadd; height: 20px; }
.pick select { flex: 1; appearance: none; padding: 2px 0 0 5px; }
.pick .ic { width: 19px; height: 18px; background: #d9dadd; padding: 2px; pointer-events: none; }
.sizerow { display: flex; gap: 5px; padding-left: 5px; }
.sizerow > span { flex: 1; line-height: 26px; }
.sizerow .num { width: 70px; }

.grip { position: absolute; right: 0; top: 721px; width: 7px; height: 74px; border-radius: 4px 0 0 4px; background: #3a4350; }
.arrow { position: absolute; right: 429px; top: 60px; z-index: 4; filter: drop-shadow(2px 4px 2px rgba(0, 0, 0, 0.4)); pointer-events: none; overflow: visible; }
</style>
